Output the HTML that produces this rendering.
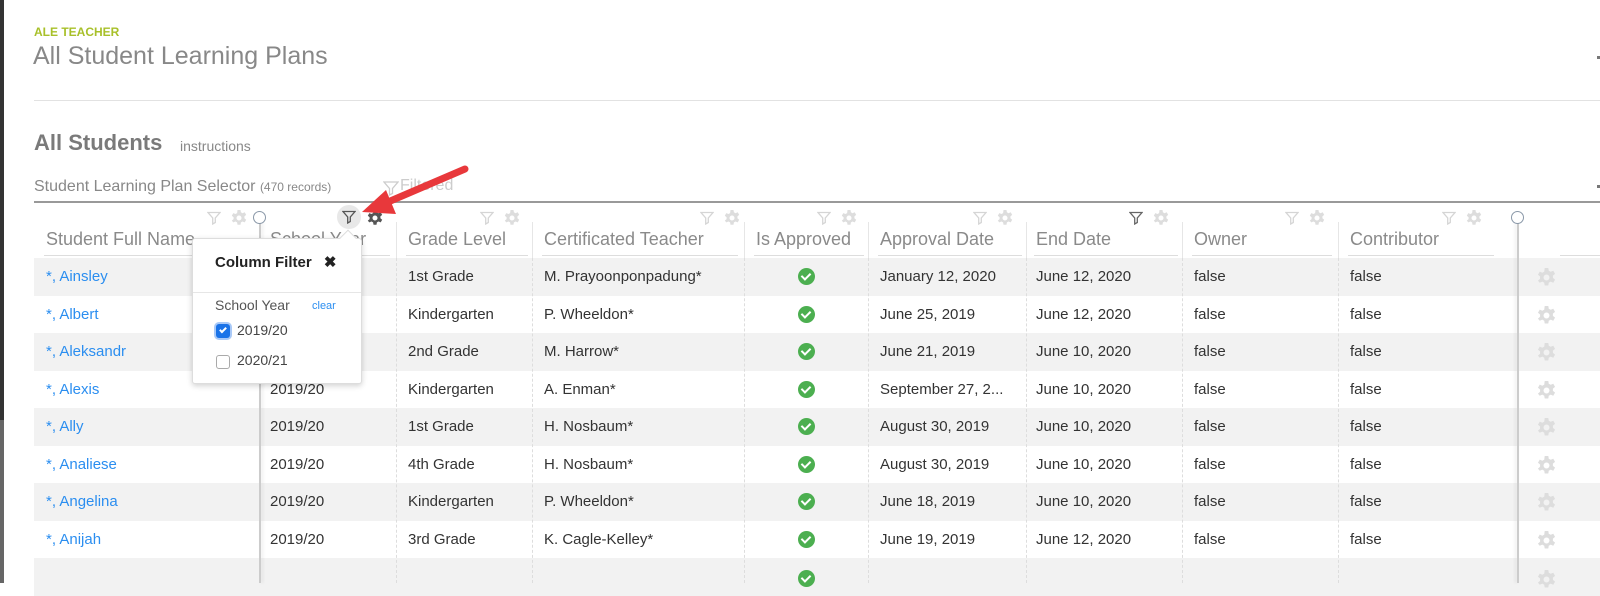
<!DOCTYPE html>
<html><head><meta charset="utf-8"><style>
*{margin:0;padding:0;box-sizing:border-box}
body{width:1600px;height:583px;overflow:hidden;background:#fff;font-family:"Liberation Sans",sans-serif;position:relative;color:#333}
.a{position:absolute;white-space:nowrap}
.hd{font-size:18px;color:#8a8a8a;top:229px}
.ul{position:absolute;top:255px;height:1px;background:#ddd}
.row{position:absolute;left:34px;right:0;height:38px}
.g{background:#f2f2f2}
.c{position:absolute;font-size:15px;line-height:38px;color:#333;white-space:nowrap}
.n{color:#2b8ef0}
.vd{position:absolute;top:258px;bottom:0;border-left:1px dashed #ddd}
.ck{position:absolute;width:17px;height:17px;border-radius:50%;background:#4caf50}
.ck:after{content:"";position:absolute;left:5px;top:3px;width:4px;height:7px;border:solid #fff;border-width:0 2.5px 2.5px 0;transform:rotate(45deg)}
.gear{position:absolute;font-size:20px;color:#ddd;line-height:20px}
.fi{position:absolute;top:209px}
</style></head><body>
<div class="a" style="left:0;top:0;width:4px;height:420px;background:#333"></div>
<div class="a" style="left:0;top:420px;width:4px;height:163px;background:#666"></div>
<div class="a" style="left:34px;top:25px;font-size:12px;font-weight:bold;color:#a8c02a">ALE TEACHER</div>
<div class="a" style="left:33px;top:42px;font-size:25px;color:#888">All Student Learning Plans</div>
<div class="a" style="left:34px;top:100px;width:1566px;height:1px;background:#e2e2e2"></div>
<div class="a" style="left:1597px;top:56px;width:3px;height:3px;background:#777"></div>
<div class="a" style="left:34px;top:130px;font-size:22px;font-weight:bold;color:#7a7a7a">All Students</div>
<div class="a" style="left:180px;top:138px;font-size:14px;color:#888">instructions</div>
<div class="a" style="left:34px;top:178px;font-size:16px;color:#888">Student Learning Plan Selector <span style="font-size:12px">(470 records)</span></div>
<svg class="a" style="left:383px;top:180px" width="16" height="16" viewBox="0 0 16 16"><path d="M1 2h14l-5.5 6.5v5l-3 1.5v-6.5z" fill="none" stroke="#ccc" stroke-width="1.3"/></svg>
<div class="a" style="left:400px;top:177px;font-size:16px;color:#ccc">Filtered</div>
<div class="a" style="left:34px;top:201px;width:1566px;height:2px;background:#999"></div>
<div class="a" style="left:1597px;top:185px;width:3px;height:3px;background:#777"></div>

<!-- rows -->
<div class="row g" style="top:258px"></div>
<div class="row" style="top:296px"></div>
<div class="row g" style="top:333px"></div>
<div class="row" style="top:371px"></div>
<div class="row g" style="top:408px"></div>
<div class="row" style="top:446px"></div>
<div class="row g" style="top:483px"></div>
<div class="row" style="top:521px"></div>
<div class="row g" style="top:558px"></div>

<div class="vd" style="left:396px"></div><div class="vd" style="left:532px"></div><div class="vd" style="left:744px"></div><div class="vd" style="left:868px"></div><div class="vd" style="left:1026px"></div><div class="vd" style="left:1182px"></div><div class="vd" style="left:1338px"></div>
<div class="vd" style="left:396px;top:222px;height:36px;border-left:1px solid #e6e6e6"></div><div class="vd" style="left:532px;top:222px;height:36px;border-left:1px solid #e6e6e6"></div><div class="vd" style="left:744px;top:222px;height:36px;border-left:1px solid #e6e6e6"></div><div class="vd" style="left:868px;top:222px;height:36px;border-left:1px solid #e6e6e6"></div><div class="vd" style="left:1026px;top:222px;height:36px;border-left:1px solid #e6e6e6"></div><div class="vd" style="left:1182px;top:222px;height:36px;border-left:1px solid #e6e6e6"></div><div class="vd" style="left:1338px;top:222px;height:36px;border-left:1px solid #e6e6e6"></div>
<div class="a" style="left:259px;top:222px;width:2px;height:361px;background:#ccc;box-shadow:2px 0 3px rgba(0,0,0,.08)"></div>
<div class="a" style="left:253px;top:211px;width:13px;height:13px;border:1.5px solid #8a98a8;border-radius:50%;background:#fff"></div>
<div class="a" style="left:1517px;top:222px;width:2px;height:361px;background:#ccc;box-shadow:-2px 0 3px rgba(0,0,0,.08)"></div>
<div class="a" style="left:1511px;top:211px;width:13px;height:13px;border:1.5px solid #8a98a8;border-radius:50%;background:#fff"></div>

<!-- headers -->
<div class="a hd" style="left:46px">Student Full Name</div><div class="ul" style="left:44px;width:208px"></div>
<div class="a hd" style="left:270px">School Year</div><div class="ul" style="left:268px;width:122px"></div>
<div class="a hd" style="left:408px">Grade Level</div><div class="ul" style="left:406px;width:122px"></div>
<div class="a hd" style="left:544px">Certificated Teacher</div><div class="ul" style="left:542px;width:196px"></div>
<div class="a hd" style="left:756px">Is Approved</div><div class="ul" style="left:754px;width:110px"></div>
<div class="a hd" style="left:880px">Approval Date</div><div class="ul" style="left:878px;width:144px"></div>
<div class="a hd" style="left:1036px">End Date</div><div class="ul" style="left:1034px;width:144px"></div>
<div class="a hd" style="left:1194px">Owner</div><div class="ul" style="left:1192px;width:140px"></div>
<div class="a hd" style="left:1350px">Contributor</div><div class="ul" style="left:1348px;width:146px"></div>
<div class="ul" style="left:1560px;width:40px"></div>

<!-- header icons -->
<svg width="0" height="0" style="position:absolute"><defs><symbol id="f" viewBox="0 0 14 14"><path d="M1 1.5h12l-4.7 5.5v4.5l-2.6 1.5v-6z" fill="none" stroke="currentColor" stroke-width="1.3"/></symbol><symbol id="gr" viewBox="0 0 16 16"><path d="M6.5 0h3l.4 2.3 1.6.9 2.2-.9 1.5 2.6-1.8 1.5v1.9l1.8 1.5-1.5 2.6-2.2-.9-1.6.9-.4 2.3h-3l-.4-2.3-1.6-.9-2.2.9L.8 10.6l1.8-1.5V7.2L.8 5.7l1.5-2.6 2.2.9 1.6-.9z M8 5.5a2.5 2.5 0 1 0 0 5a2.5 2.5 0 1 0 0-5z" fill="currentColor" fill-rule="evenodd"/></symbol></defs></svg>
<svg class="a" style="left:207px;top:211px;color:#d5d5d5" width="14" height="14"><use href="#f"/></svg><svg class="a" style="left:231px;top:210px;color:#ddd" width="16" height="16"><use href="#gr"/></svg>
<div class="a" style="left:337px;top:205px;width:24px;height:24px;border-radius:50%;background:#e8e8e8"></div>
<svg class="a" style="left:342px;top:210px;color:#555" width="14" height="14"><use href="#f"/></svg><svg class="a" style="left:367px;top:210px;color:#555" width="16" height="16"><use href="#gr"/></svg>
<svg class="a" style="left:480px;top:211px;color:#d5d5d5" width="14" height="14"><use href="#f"/></svg><svg class="a" style="left:504px;top:210px;color:#ddd" width="16" height="16"><use href="#gr"/></svg>
<svg class="a" style="left:700px;top:211px;color:#d5d5d5" width="14" height="14"><use href="#f"/></svg><svg class="a" style="left:724px;top:210px;color:#ddd" width="16" height="16"><use href="#gr"/></svg>
<svg class="a" style="left:817px;top:211px;color:#d5d5d5" width="14" height="14"><use href="#f"/></svg><svg class="a" style="left:841px;top:210px;color:#ddd" width="16" height="16"><use href="#gr"/></svg>
<svg class="a" style="left:973px;top:211px;color:#d5d5d5" width="14" height="14"><use href="#f"/></svg><svg class="a" style="left:997px;top:210px;color:#ddd" width="16" height="16"><use href="#gr"/></svg>
<svg class="a" style="left:1129px;top:211px;color:#666" width="14" height="14"><use href="#f"/></svg><svg class="a" style="left:1153px;top:210px;color:#ddd" width="16" height="16"><use href="#gr"/></svg>
<svg class="a" style="left:1285px;top:211px;color:#d5d5d5" width="14" height="14"><use href="#f"/></svg><svg class="a" style="left:1309px;top:210px;color:#ddd" width="16" height="16"><use href="#gr"/></svg>
<svg class="a" style="left:1442px;top:211px;color:#d5d5d5" width="14" height="14"><use href="#f"/></svg><svg class="a" style="left:1466px;top:210px;color:#ddd" width="16" height="16"><use href="#gr"/></svg>

<!-- data -->
<div style="position:absolute;left:0;top:258px;width:1600px">
<div class="c n" style="left:46px;top:0">*, Ainsley</div><div class="c" style="left:408px;top:0">1st Grade</div><div class="c" style="left:544px;top:0">M. Prayoonponpadung*</div><div class="ck" style="left:798px;top:10px"></div><div class="c" style="left:880px;top:0">January 12, 2020</div><div class="c" style="left:1036px;top:0">June 12, 2020</div><div class="c" style="left:1194px;top:0">false</div><div class="c" style="left:1350px;top:0">false</div><svg class="a" style="left:1537px;top:10px;color:#ddd" width="19" height="19"><use href="#gr"/></svg>
</div>
<div style="position:absolute;left:0;top:296px;width:1600px">
<div class="c n" style="left:46px;top:0">*, Albert</div><div class="c" style="left:408px;top:0">Kindergarten</div><div class="c" style="left:544px;top:0">P. Wheeldon*</div><div class="ck" style="left:798px;top:10px"></div><div class="c" style="left:880px;top:0">June 25, 2019</div><div class="c" style="left:1036px;top:0">June 12, 2020</div><div class="c" style="left:1194px;top:0">false</div><div class="c" style="left:1350px;top:0">false</div><svg class="a" style="left:1537px;top:10px;color:#ddd" width="19" height="19"><use href="#gr"/></svg>
</div>
<div style="position:absolute;left:0;top:333px;width:1600px">
<div class="c n" style="left:46px;top:0">*, Aleksandr</div><div class="c" style="left:408px;top:0">2nd Grade</div><div class="c" style="left:544px;top:0">M. Harrow*</div><div class="ck" style="left:798px;top:10px"></div><div class="c" style="left:880px;top:0">June 21, 2019</div><div class="c" style="left:1036px;top:0">June 10, 2020</div><div class="c" style="left:1194px;top:0">false</div><div class="c" style="left:1350px;top:0">false</div><svg class="a" style="left:1537px;top:10px;color:#ddd" width="19" height="19"><use href="#gr"/></svg>
</div>
<div style="position:absolute;left:0;top:371px;width:1600px">
<div class="c n" style="left:46px;top:0">*, Alexis</div><div class="c" style="left:270px;top:0">2019/20</div><div class="c" style="left:408px;top:0">Kindergarten</div><div class="c" style="left:544px;top:0">A. Enman*</div><div class="ck" style="left:798px;top:10px"></div><div class="c" style="left:880px;top:0">September 27, 2...</div><div class="c" style="left:1036px;top:0">June 10, 2020</div><div class="c" style="left:1194px;top:0">false</div><div class="c" style="left:1350px;top:0">false</div><svg class="a" style="left:1537px;top:10px;color:#ddd" width="19" height="19"><use href="#gr"/></svg>
</div>
<div style="position:absolute;left:0;top:408px;width:1600px">
<div class="c n" style="left:46px;top:0">*, Ally</div><div class="c" style="left:270px;top:0">2019/20</div><div class="c" style="left:408px;top:0">1st Grade</div><div class="c" style="left:544px;top:0">H. Nosbaum*</div><div class="ck" style="left:798px;top:10px"></div><div class="c" style="left:880px;top:0">August 30, 2019</div><div class="c" style="left:1036px;top:0">June 10, 2020</div><div class="c" style="left:1194px;top:0">false</div><div class="c" style="left:1350px;top:0">false</div><svg class="a" style="left:1537px;top:10px;color:#ddd" width="19" height="19"><use href="#gr"/></svg>
</div>
<div style="position:absolute;left:0;top:446px;width:1600px">
<div class="c n" style="left:46px;top:0">*, Analiese</div><div class="c" style="left:270px;top:0">2019/20</div><div class="c" style="left:408px;top:0">4th Grade</div><div class="c" style="left:544px;top:0">H. Nosbaum*</div><div class="ck" style="left:798px;top:10px"></div><div class="c" style="left:880px;top:0">August 30, 2019</div><div class="c" style="left:1036px;top:0">June 10, 2020</div><div class="c" style="left:1194px;top:0">false</div><div class="c" style="left:1350px;top:0">false</div><svg class="a" style="left:1537px;top:10px;color:#ddd" width="19" height="19"><use href="#gr"/></svg>
</div>
<div style="position:absolute;left:0;top:483px;width:1600px">
<div class="c n" style="left:46px;top:0">*, Angelina</div><div class="c" style="left:270px;top:0">2019/20</div><div class="c" style="left:408px;top:0">Kindergarten</div><div class="c" style="left:544px;top:0">P. Wheeldon*</div><div class="ck" style="left:798px;top:10px"></div><div class="c" style="left:880px;top:0">June 18, 2019</div><div class="c" style="left:1036px;top:0">June 10, 2020</div><div class="c" style="left:1194px;top:0">false</div><div class="c" style="left:1350px;top:0">false</div><svg class="a" style="left:1537px;top:10px;color:#ddd" width="19" height="19"><use href="#gr"/></svg>
</div>
<div style="position:absolute;left:0;top:521px;width:1600px">
<div class="c n" style="left:46px;top:0">*, Anijah</div><div class="c" style="left:270px;top:0">2019/20</div><div class="c" style="left:408px;top:0">3rd Grade</div><div class="c" style="left:544px;top:0">K. Cagle-Kelley*</div><div class="ck" style="left:798px;top:10px"></div><div class="c" style="left:880px;top:0">June 19, 2019</div><div class="c" style="left:1036px;top:0">June 12, 2020</div><div class="c" style="left:1194px;top:0">false</div><div class="c" style="left:1350px;top:0">false</div><svg class="a" style="left:1537px;top:10px;color:#ddd" width="19" height="19"><use href="#gr"/></svg>
</div>
<div class="ck" style="left:798px;top:570px"></div><svg class="a" style="left:1537px;top:570px;color:#ddd" width="19" height="19"><use href="#gr"/></svg>

<!-- popup -->
<div class="a" style="left:192px;top:238px;width:170px;height:146px;background:#fff;border:1px solid #ddd;border-radius:3px;box-shadow:0 2px 6px rgba(0,0,0,.18)"></div>
<div class="a" style="left:342px;top:232px;width:12px;height:12px;background:#fff;border-left:1px solid #ddd;border-top:1px solid #ddd;transform:rotate(45deg)"></div>
<div class="a" style="left:215px;top:253px;font-size:15px;font-weight:bold;color:#222">Column Filter <span style="margin-left:8px">✖</span></div>
<div class="a" style="left:193px;top:292px;width:168px;height:1px;background:#e6e6e6"></div>
<div class="a" style="left:215px;top:297px;font-size:14px;color:#555">School Year</div>
<div class="a" style="left:312px;top:300px;font-size:11px;color:#2b8ef0">clear</div>
<div class="a" style="left:216px;top:324px;width:14px;height:14px;border-radius:3px;background:#1a73e8;box-shadow:0 0 0 2px #a9c9f7"></div>
<div class="a" style="left:221px;top:326px;width:4px;height:7px;border:solid #fff;border-width:0 2px 2px 0;transform:rotate(45deg)"></div>
<div class="a" style="left:237px;top:322px;font-size:14px;color:#444">2019/20</div>
<div class="a" style="left:216px;top:355px;width:14px;height:14px;border-radius:3px;border:1px solid #aaa;background:#fff"></div>
<div class="a" style="left:237px;top:352px;font-size:14px;color:#444">2020/21</div>

<!-- arrow -->
<svg class="a" style="left:0;top:0" width="600" height="260"><line x1="465" y1="169" x2="388" y2="202" stroke="#e8383b" stroke-width="7" stroke-linecap="round"/><path d="M362 212 L386 190 L396 214 Z" fill="#e8383b"/></svg>
</body></html>
